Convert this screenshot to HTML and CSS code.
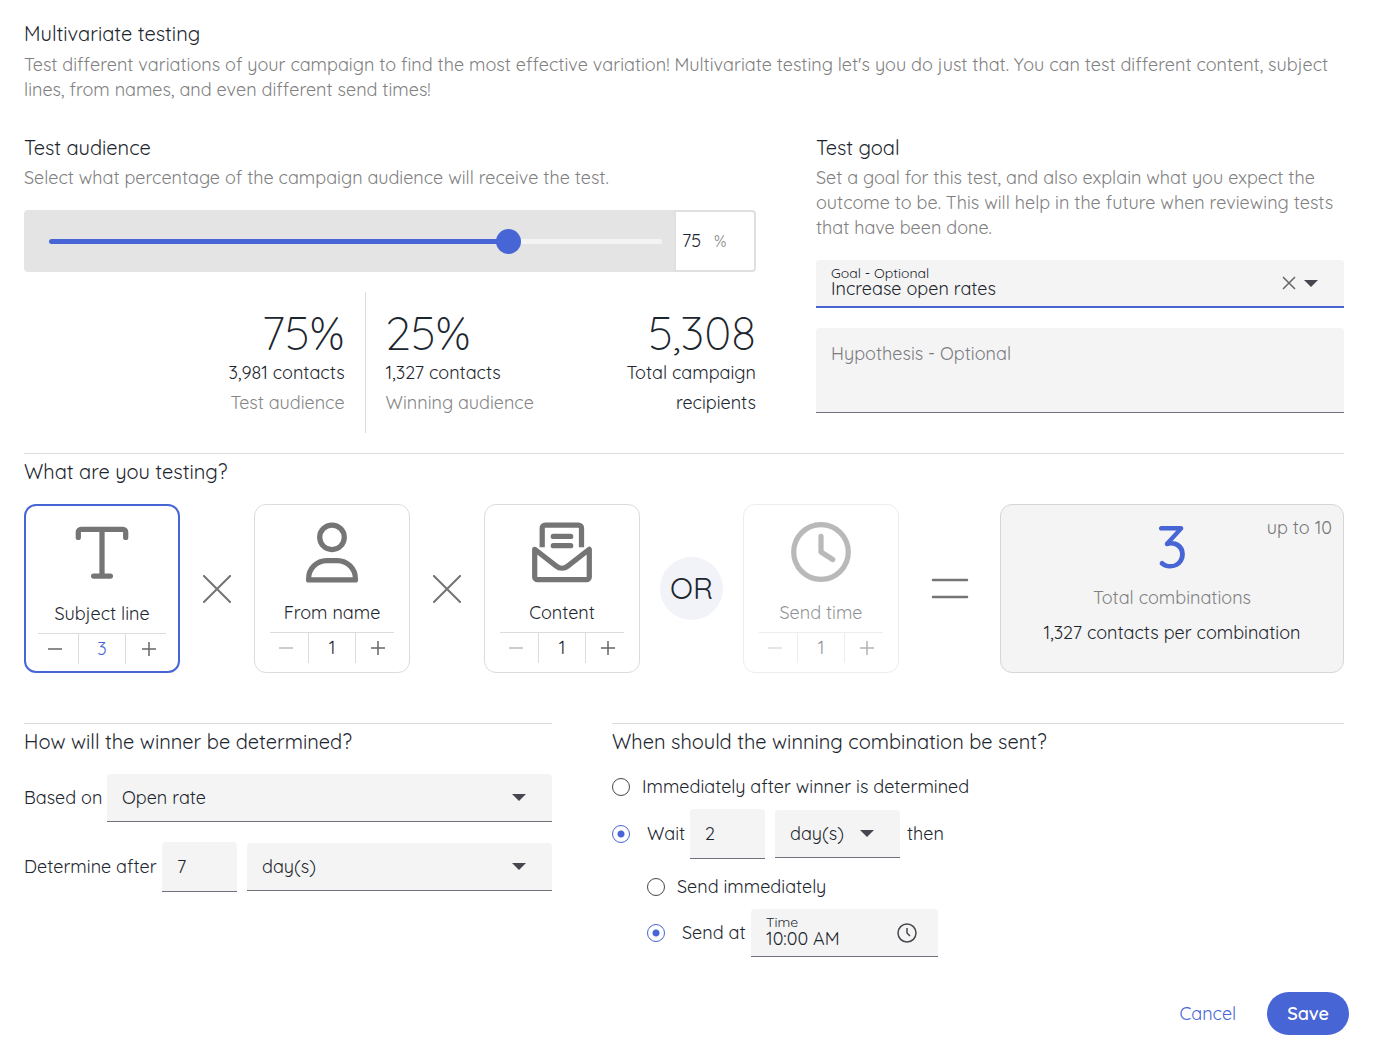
FILE: index.html
```html
<!DOCTYPE html>
<html lang="en">
<head>
    <meta charset="UTF-8">
    <meta name="viewport" content="width=device-width, initial-scale=1.0">
    <title>Multivariate testing</title>
    <link rel="stylesheet" href="styles.css">
</head>
<body>
    <form class="page">
        <header class="intro">
            <h1>Multivariate testing</h1>
            <p class="hint">Test different variations of your campaign to find the most effective variation! Multivariate testing let's you do just that. You can test different content, subject lines, from names, and even different send times!</p>
        </header>

        <div class="setup">
            <section class="audience">
                <h2>Test audience</h2>
                <p class="hint">Select what percentage of the campaign audience will receive the test.</p>

                <div class="slider-box">
                    <div class="slider-area">
                        <div class="slider">
                            <div class="slider-track"><div class="slider-fill" style="width: 75%"></div></div>
                            <input type="range" id="audience-range" min="0" max="100" value="75" aria-label="Test audience percentage">
                        </div>
                    </div>
                    <div class="percent-box">
                        <input type="text" id="audience-percent" value="75" aria-label="Percent">
                        <span>%</span>
                    </div>
                </div>

                <div class="stats">
                    <div class="stat stat-test">
                        <div class="stat-value">75%</div>
                        <div>3,981 contacts</div>
                        <div class="muted">Test audience</div>
                    </div>
                    <div class="stat stat-winning">
                        <div class="stat-value">25%</div>
                        <div>1,327 contacts</div>
                        <div class="muted">Winning audience</div>
                    </div>
                    <div class="stat stat-total">
                        <div class="stat-value">5,308</div>
                        <div>Total campaign recipients</div>
                    </div>
                </div>
            </section>

            <section class="goal">
                <h2>Test goal</h2>
                <p class="hint">Set a goal for this test, and also explain what you expect the outcome to be. This will help in the future when reviewing tests that have been done.</p>

                <div class="field field-active">
                    <div class="field-body">
                        <label for="goal">Goal - Optional</label>
                        <select id="goal">
                            <option>Increase open rates</option>
                            <option>Increase click rates</option>
                        </select>
                    </div>
                    <button type="button" class="clear" aria-label="Clear goal">
                        <svg width="14" height="14" viewBox="0 0 14 14"><path d="M1 1l12 12M13 1L1 13"/></svg>
                    </button>
                    <svg class="arrow" width="14" height="7" viewBox="0 0 14 7"><path d="M0 0h14L7 7z"/></svg>
                </div>

                <textarea class="hypothesis" placeholder="Hypothesis - Optional" aria-label="Hypothesis - Optional"></textarea>
            </section>
        </div>

        <section class="testing">
            <h2>What are you testing?</h2>
            <div class="formula">
                <div class="card card-active">
                    <svg class="card-icon" viewBox="0 0 24 24"><path d="M4.1 6.8V5a.9.9 0 0 1 .9-.9h14a.9.9 0 0 1 .9.9v1.8M12 4.1v15.6M9.2 19.7h5.6"/></svg>
                    <div class="card-label">Subject line</div>
                    <div class="stepper">
                        <button type="button" aria-label="Fewer subject lines"><svg viewBox="0 0 16 16"><path d="M1 8h14"/></svg></button>
                        <output>3</output>
                        <button type="button" aria-label="More subject lines"><svg viewBox="0 0 16 16"><path d="M1 8h14M8 1v14"/></svg></button>
                    </div>
                </div>

                <svg class="times" viewBox="0 0 30 30"><path d="M1 1l28 28M29 1L1 29"/></svg>

                <div class="card">
                    <svg class="card-icon" viewBox="0 0 24 24"><circle cx="12" cy="7.1" r="4.1"/><path d="M4.2 21.3v-.4a6 6 0 0 1 6-6h3.6a6 6 0 0 1 6 6v.4z"/></svg>
                    <div class="card-label">From name</div>
                    <div class="stepper">
                        <button type="button" aria-label="Fewer from names" disabled><svg viewBox="0 0 16 16"><path d="M1 8h14"/></svg></button>
                        <output>1</output>
                        <button type="button" aria-label="More from names"><svg viewBox="0 0 16 16"><path d="M1 8h14M8 1v14"/></svg></button>
                    </div>
                </div>

                <svg class="times" viewBox="0 0 30 30"><path d="M1 1l28 28M29 1L1 29"/></svg>

                <div class="card">
                    <svg class="card-icon" viewBox="0 0 24 24"><path class="butt" d="M5.4 10.4V4a1 1 0 0 1 1-1h11.1a1 1 0 0 1 1 1v6.4"/><path d="M9.1 6.8h5.8M9.1 9.9h5.8M2.9 11.1l7.2 5.6a3 3 0 0 0 3.8 0l7.2-5.6v9.2a.9.9 0 0 1-.9.9H3.8a.9.9 0 0 1-.9-.9z"/></svg>
                    <div class="card-label">Content</div>
                    <div class="stepper">
                        <button type="button" aria-label="Less content" disabled><svg viewBox="0 0 16 16"><path d="M1 8h14"/></svg></button>
                        <output>1</output>
                        <button type="button" aria-label="More content"><svg viewBox="0 0 16 16"><path d="M1 8h14M8 1v14"/></svg></button>
                    </div>
                </div>

                <div class="or">OR</div>

                <div class="card card-disabled">
                    <svg class="card-icon" viewBox="0 0 24 24"><circle cx="12" cy="12" r="9.1"/><path d="M12 6.8V12l3.9 2.5"/></svg>
                    <div class="card-label">Send time</div>
                    <div class="stepper">
                        <button type="button" aria-label="Fewer send times" disabled><svg viewBox="0 0 16 16"><path d="M1 8h14"/></svg></button>
                        <output>1</output>
                        <button type="button" aria-label="More send times"><svg viewBox="0 0 16 16"><path d="M1 8h14M8 1v14"/></svg></button>
                    </div>
                </div>

                <svg class="equals" viewBox="0 0 38 24"><path d="M2 3h34M2 20h34"/></svg>

                <div class="result">
                    <span class="result-limit">up to 10</span>
                    <div class="result-value">3</div>
                    <div class="result-label">Total combinations</div>
                    <div>1,327 contacts per combination</div>
                </div>
            </div>
        </section>

        <div class="winner">
            <section class="ruled">
                <h2>How will the winner be determined?</h2>
                <div class="row">
                    <label class="based-label" for="based-on">Based on</label>
                    <div class="select grow">
                        <select id="based-on">
                            <option>Open rate</option>
                            <option>Click rate</option>
                        </select>
                        <svg class="arrow" width="14" height="7" viewBox="0 0 14 7"><path d="M0 0h14L7 7z"/></svg>
                    </div>
                </div>
                <div class="row">
                    <label class="after-label" for="after">Determine after</label>
                    <input class="number" type="text" id="after" value="7">
                    <div class="select grow">
                        <select aria-label="Determine after unit">
                            <option>day(s)</option>
                            <option>hour(s)</option>
                        </select>
                        <svg class="arrow" width="14" height="7" viewBox="0 0 14 7"><path d="M0 0h14L7 7z"/></svg>
                    </div>
                </div>
            </section>

            <section class="ruled">
                <h2>When should the winning combination be sent?</h2>
                <div class="options">
                    <label class="option"><input type="radio" name="when"> Immediately after winner is determined</label>
                    <div class="option option-fields">
                        <input type="radio" name="when" id="wait" checked>
                        <label class="wait-label" for="wait">Wait</label>
                        <input class="number" type="text" value="2" aria-label="Wait amount">
                        <div class="select select-small">
                            <select aria-label="Wait unit">
                                <option>day(s)</option>
                                <option>hour(s)</option>
                            </select>
                            <svg class="arrow" width="14" height="7" viewBox="0 0 14 7"><path d="M0 0h14L7 7z"/></svg>
                        </div>
                        <span class="then">then</span>
                    </div>
                    <div class="suboptions">
                        <label class="option"><input type="radio" name="send"> Send immediately</label>
                        <div class="option option-fields">
                            <input type="radio" name="send" id="send-at" checked>
                            <label class="send-label" for="send-at">Send at</label>
                            <div class="field field-time">
                                <div class="field-body">
                                    <label for="time">Time</label>
                                    <input type="text" id="time" value="10:00 AM">
                                </div>
                                <svg class="clock" viewBox="0 0 22 22"><circle cx="11" cy="11" r="9"/><path d="M11 6v5l3 3"/></svg>
                            </div>
                        </div>
                    </div>
                </div>
            </section>
        </div>

        <footer class="actions">
            <button type="button" class="btn-cancel">Cancel</button>
            <button type="submit" class="btn-save">Save</button>
        </footer>
    </form>

    <script>
        const range = document.getElementById('audience-range');
        const percent = document.getElementById('audience-percent');
        const fill = document.querySelector('.slider-fill');

        range.addEventListener('input', function() {
            percent.value = range.value;
            fill.style.width = range.value + '%';
        });
    </script>
</body>
</html>
```
FILE: styles.css
```css
* {
    box-sizing: border-box;
}
body {
    margin: 0;
    font-family: Quicksand, Lato, sans-serif;
    font-size: 18px;
    line-height: 24px;
    color: #1c262e;
    background: #fff;
}
input, select, textarea, button {
    font: inherit;
    color: inherit;
}
h1, h2 {
    margin: 0;
    font-size: 20px;
    line-height: 24px;
    font-weight: 400;
}
p {
    margin: 0;
}
svg {
    fill: none;
    stroke: currentColor;
    flex-shrink: 0;
}
.page {
    padding: 22px 30px 24px 24px;
}
.hint {
    margin-top: 6px;
    line-height: 25px;
    color: #808080;
}
.muted {
    color: #858585;
}

/* Audience and goal */
.setup {
    display: grid;
    grid-template-columns: 3fr 2fr;
    margin-top: 34px;
}
.setup .hint {
    margin-top: 5px;
}
.audience {
    padding-right: 60px;
}
.slider-box {
    display: flex;
    height: 62px;
    margin-top: 20px;
}
.slider-area {
    flex: 1;
    display: flex;
    align-items: center;
    padding: 0 12px 0 25px;
    background: #e4e4e4;
    border-radius: 4px 0 0 4px;
}
.slider {
    position: relative;
    flex: 1;
}
.slider-track {
    height: 5px;
    border-radius: 3px;
    background: #f4f4f4;
}
.slider-fill {
    height: 5px;
    border-radius: 3px;
    background: #4865d5;
}
.slider input {
    position: absolute;
    top: -10px;
    left: -12px;
    width: calc(100% + 24px);
    height: 25px;
    margin: 0;
    background: transparent;
    appearance: none;
    -webkit-appearance: none;
}
.slider input::-webkit-slider-thumb {
    -webkit-appearance: none;
    width: 25px;
    height: 25px;
    border-radius: 50%;
    background: #4865d5;
}
.percent-box {
    display: flex;
    align-items: center;
    width: 82px;
    padding-left: 6px;
    border: 2px solid #e0e0e0;
    border-radius: 0 4px 4px 0;
}
.percent-box input {
    width: 32px;
    padding: 0;
    border: 0;
    background: transparent;
}
.percent-box span {
    font-size: 16px;
    color: #8c8c8c;
}
.stats {
    display: grid;
    grid-template-columns: 7fr 4fr 4fr;
    margin-top: 20px;
}
.stat {
    padding: 16px 0 15px 20px;
    line-height: 30px;
}
.stat-value {
    height: 50px;
    font-size: 46px;
    line-height: 50px;
    font-weight: 300;
}
.stat-test {
    padding-right: 20px;
    border-right: 1px solid #dcdcdc;
    text-align: right;
}
.stat-total {
    text-align: right;
}

/* Filled form fields */
.field, .select, .number, .hypothesis {
    background: #f4f4f4;
    border: 0;
    border-bottom: 1px solid #6f707b;
    border-radius: 4px 4px 0 0;
}
.field {
    display: flex;
    align-items: center;
    height: 48px;
}
.field-active {
    margin-top: 20px;
    padding-right: 26px;
    border-bottom: 2px solid #4865d5;
}
.field-body {
    flex: 1;
    min-width: 0;
    padding: 0 0 3px 15px;
}
.field-body label {
    display: block;
    font-size: 14px;
    line-height: 14px;
}
.field-body select, .field-body input {
    display: block;
    width: 100%;
    height: 18px;
    padding: 0;
    border: 0;
    background: transparent;
    line-height: 18px;
    appearance: none;
}
.clear {
    display: flex;
    padding: 0;
    margin-right: 8px;
    border: 0;
    background: transparent;
    color: #666;
}
.clear svg {
    stroke-width: 1.5;
}
.arrow {
    fill: #46464f;
    stroke: none;
    pointer-events: none;
}
.hypothesis {
    display: block;
    width: 100%;
    height: 85px;
    margin-top: 20px;
    padding: 14px 15px;
    resize: none;
}
.hypothesis::placeholder {
    color: #7b7b80;
}
.select {
    position: relative;
    height: 48px;
}
.select select {
    width: 100%;
    height: 47px;
    padding: 0 15px;
    border: 0;
    background: transparent;
    appearance: none;
}
.select .arrow {
    position: absolute;
    top: 20px;
    right: 26px;
}
.number {
    width: 75px;
    height: 50px;
    padding: 0 15px;
}

/* Test formula */
.testing, .ruled {
    border-top: 1px solid #dcdcdc;
    padding-top: 6px;
}
.testing {
    margin-top: 20px;
}
.formula {
    display: flex;
    align-items: center;
    margin-top: 20px;
}
.card {
    flex-shrink: 0;
    width: 156px;
    height: 169px;
    padding: 11px 15px 0;
    border: 1px solid #dcdcdc;
    border-radius: 12px;
    text-align: center;
}
.card-active {
    padding: 11px 12px 0;
    border: 2px solid #4865d5;
}
.card-active output {
    color: #4865d5;
}
.card-disabled {
    opacity: 0.5;
}
.card-icon {
    display: block;
    width: 72px;
    height: 72px;
    margin: 0 auto;
    color: #757575;
    stroke-width: 1.75;
    stroke-linecap: round;
    stroke-linejoin: round;
}
.card-icon .butt {
    stroke-linecap: butt;
}
.card-label {
    margin: 13px 0 7px;
}
.stepper {
    display: grid;
    grid-template-columns: 1fr 48px 1fr;
    height: 30px;
    border-top: 1px solid #dcdcdc;
}
.stepper button {
    display: flex;
    align-items: center;
    justify-content: center;
    padding: 0 6px 0 0;
    border: 0;
    background: transparent;
    color: #666;
}
.stepper button:last-child {
    padding: 0 0 0 6px;
}
.stepper button:disabled {
    color: #bbb;
}
.stepper svg {
    width: 16px;
    height: 16px;
    stroke-width: 1.5;
}
.stepper output {
    border: solid #dcdcdc;
    border-width: 0 1px;
    line-height: 30px;
}
.times {
    width: 28px;
    height: 28px;
    margin: 0 23px;
    color: #757575;
    stroke-width: 2.2;
    stroke-linecap: round;
}
.or {
    flex-shrink: 0;
    width: 63px;
    height: 63px;
    margin: 0 20px;
    border-radius: 50%;
    background: #f2f3f9;
    font-size: 30px;
    line-height: 63px;
    text-align: center;
}
.equals {
    width: 38px;
    height: 24px;
    margin: 0 31px 0 32px;
    color: #757575;
    stroke-width: 2.5;
    stroke-linecap: round;
}
.result {
    position: relative;
    flex: 1;
    height: 169px;
    padding-top: 11px;
    border: 1px solid #d6d6d6;
    border-radius: 12px;
    background: #f4f4f4;
    text-align: center;
}
.result-value {
    font-size: 60px;
    line-height: 60px;
    font-weight: 500;
    color: #4865d5;
}
.result-label {
    margin: 10px 0 11px;
    color: #808080;
}
.result-limit {
    position: absolute;
    top: 11px;
    right: 11px;
    color: #757575;
}

/* Winner */
.winner {
    display: grid;
    grid-template-columns: 2fr 3fr;
    margin-top: 50px;
}
.winner .ruled + .ruled {
    margin-left: 60px;
}
.row {
    display: flex;
    align-items: center;
    margin-top: 20px;
}
.based-label {
    min-width: 83px;
}
.after-label {
    min-width: 138px;
}
.grow {
    flex: 1;
}
.number + .select {
    margin-left: 10px;
}
.options {
    margin-top: 20px;
}
.option {
    display: flex;
    align-items: center;
    height: 25px;
}
.option input[type="radio"] {
    width: 18px;
    height: 18px;
    margin: 0 12px 0 0;
    border: 1px solid #46464f;
    border-radius: 50%;
    appearance: none;
    -webkit-appearance: none;
}
.option input[type="radio"]:checked {
    border-color: #4865d5;
    background: radial-gradient(circle, #4865d5 3px, transparent 4px);
}
.option-fields {
    height: 50px;
    margin-top: 10px;
}
.option-fields input[type="radio"] {
    margin-right: 17px;
}
.wait-label {
    min-width: 43px;
}
.send-label {
    min-width: 69px;
}
.select-small {
    width: 125px;
}
.then {
    margin-left: 7px;
}
.suboptions {
    margin: 15px 0 0 35px;
}
.suboptions .option-fields {
    margin-top: 9px;
}
.field-time {
    width: 187px;
    padding-right: 20px;
}
.clock {
    width: 22px;
    height: 22px;
    color: #46464f;
    stroke-width: 1.5;
}

/* Footer */
.actions {
    display: flex;
    justify-content: flex-end;
    margin: 34px -5px 0 0;
}
.actions button {
    height: 43px;
    padding: 0 20px;
    border: 0;
    border-radius: 22px;
    background: transparent;
    color: #4865d5;
}
.actions .btn-cancel {
    margin-right: 11px;
}
.actions .btn-save {
    background: #4865d5;
    color: #fff;
    font-weight: 600;
}
```
